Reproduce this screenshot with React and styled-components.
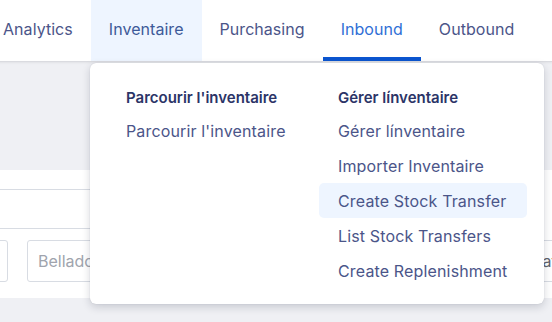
import styled, { createGlobalStyle } from "styled-components";

const GlobalStyle = createGlobalStyle`
  * {
    box-sizing: border-box;
  }

  body {
    margin: 0;
    background: #eff0f4;
    font-family: Inter, "Noto Sans", sans-serif;
  }
`;

const Page = styled.div`
  position: relative;
  width: 552px;
  height: 322px;
  overflow: hidden;
  background: #eff0f4;
`;

const NavBar = styled.nav`
  display: flex;
  height: 62px;
  margin-left: -15px;
  background: #fff;
  border-bottom: 1px solid #dadbe0;
  box-shadow: 0 1px 2px rgba(0, 0, 0, 0.06);
`;

const Tab = styled.div`
  display: flex;
  align-items: center;
  padding: 0 18px 3px;
  font-size: 16px;
  letter-spacing: 0.05px;
  white-space: nowrap;
  color: ${(p) => (p.$active ? "#2f6fd6" : p.$open ? "#3d5a99" : "#4b5589")};
  background: ${(p) => (p.$open ? "#eef5ff" : "transparent")};
  box-shadow: ${(p) => (p.$active ? "inset 0 -4px 0 #0b55cf" : "none")};
`;

const Spacer = styled.div`
  height: 108px;
`;

const Panel = styled.section`
  display: flex;
  flex-direction: column;
  gap: 11px;
  height: 128px;
  padding-top: 19px;
  background: #fff;
`;

const SearchBox = styled.div`
  width: 520px;
  height: 40px;
  margin-left: -20px;
  border: 1px solid #d8dce3;
  border-radius: 3px;
`;

const FilterRow = styled.div`
  display: flex;
  gap: 19px;
  margin-left: -100px;
`;

const Field = styled.div`
  display: flex;
  align-items: center;
  flex: none;
  width: ${(p) => p.$w}px;
  height: 42px;
  padding: 0 10px;
  border: 1px solid #d8dce3;
  border-radius: 3px;
  font-size: 16px;
  color: ${(p) => (p.$filled ? "#5f636c" : "#a0a4ad")};
  white-space: nowrap;
  overflow: hidden;
`;

const Dropdown = styled.div`
  position: absolute;
  top: 63px;
  left: 90px;
  width: 454px;
  display: grid;
  grid-template-columns: 208px 208px;
  column-gap: 4px;
  padding: 18px 17px 16px;
  background: #fff;
  border-radius: 6px;
  box-shadow: 0 3px 8px rgba(20, 25, 50, 0.18), 0 0 1px rgba(20, 25, 50, 0.2);
`;

const Column = styled.div`
  display: flex;
  flex-direction: column;
`;

const Heading = styled.div`
  display: flex;
  align-items: center;
  height: 32px;
  padding: 0 19px;
  font-size: 15px;
  font-weight: 600;
  color: #2b3467;
  white-space: nowrap;
`;

const Item = styled.div`
  display: flex;
  align-items: center;
  height: 35px;
  padding: 0 19px;
  border-radius: 5px;
  font-size: 16px;
  letter-spacing: 0.15px;
  color: #4b5589;
  white-space: nowrap;
  background: ${(p) => (p.$hover ? "#eef5ff" : "transparent")};
`;

const tabs = ["Analytics", "Inventaire", "Purchasing", "Inbound", "Outbound"];

const menu = [
  {
    title: "Parcourir l'inventaire",
    items: ["Parcourir l'inventaire"],
  },
  {
    title: "Gérer línventaire",
    items: [
      "Gérer línventaire",
      "Importer Inventaire",
      "Create Stock Transfer",
      "List Stock Transfers",
      "Create Replenishment",
    ],
  },
];

export default function App() {
  return (
    <Page>
      <GlobalStyle />
      <NavBar>
        {tabs.map((t) => (
          <Tab key={t} $open={t === "Inventaire"} $active={t === "Inbound"}>
            {t}
          </Tab>
        ))}
      </NavBar>
      <Spacer />
      <Panel>
        <SearchBox />
        <FilterRow>
          <Field $w={108} />
          <Field $w={220}>Belladonna</Field>
          <Field $w={235} />
          <Field $w={120} $filled>
            Date
          </Field>
        </FilterRow>
      </Panel>
      <Dropdown>
        {menu.map((col) => (
          <Column key={col.title}>
            <Heading>{col.title}</Heading>
            {col.items.map((it) => (
              <Item key={it} $hover={it === "Create Stock Transfer"}>
                {it}
              </Item>
            ))}
          </Column>
        ))}
      </Dropdown>
    </Page>
  );
}
